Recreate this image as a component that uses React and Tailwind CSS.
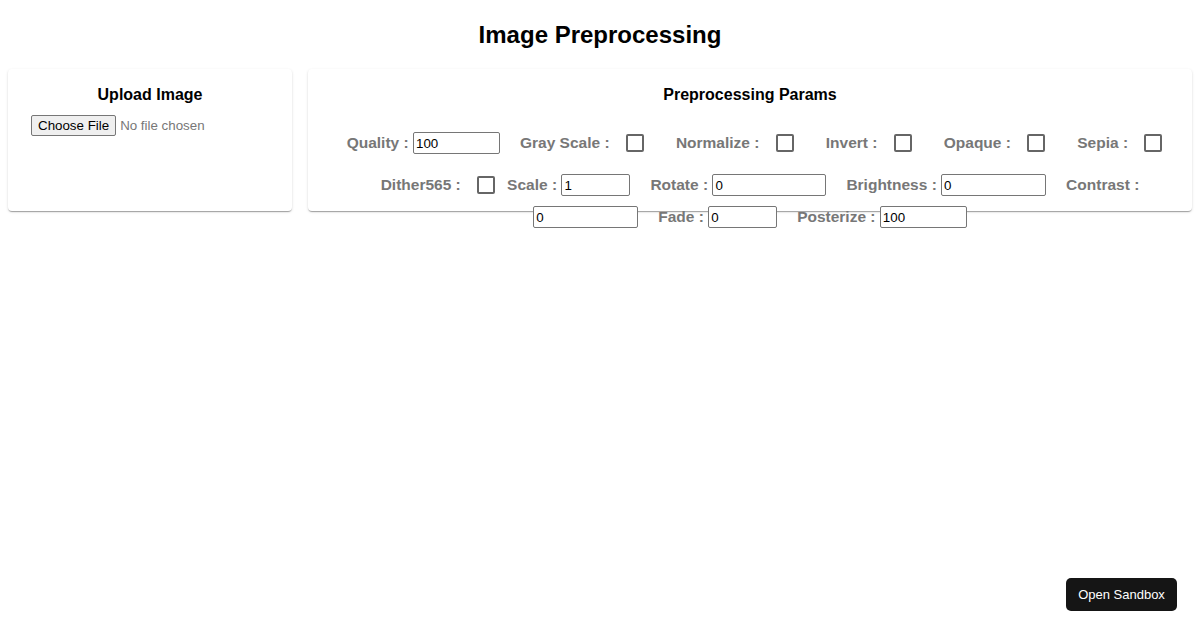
const font = { fontFamily: '"Liberation Sans", Arial, sans-serif' };

const Label = ({ text }) => (
  <span className="text-[15.5px] font-bold text-[#777] leading-[18px] whitespace-pre">{text}</span>
);

const NumField = ({ value, width }) => (
  <input
    type="text"
    defaultValue={value}
    className={`h-[22px] border border-[#767676] rounded-[2px] px-[2px] text-[13.33px] text-black bg-white outline-none ${width}`}
  />
);

const Check = ({ className = "" }) => (
  <input
    type="checkbox"
    className={`appearance-none w-[18px] h-[18px] border-2 border-[#666] rounded-[2px] bg-white ${className}`}
  />
);

const cardShadow =
  "shadow-[0_2px_1px_-1px_rgba(0,0,0,0.2),0_1px_1px_0_rgba(0,0,0,0.14),0_1px_3px_0_rgba(0,0,0,0.12)]";

const App = () => {
  return (
    <div className="min-h-screen bg-white text-black" style={font}>
      <div className="pt-[21px]">
        <h1 className="text-2xl leading-7 font-bold text-center">Image Preprocessing</h1>
      </div>

      <div className="flex gap-4 px-2 mt-5">
        <div className={`w-[284px] h-[142px] bg-white rounded pt-[17px] ${cardShadow}`}>
          <h3 className="text-base leading-[18px] font-bold text-center">Upload Image</h3>
          <div className="mt-[9px] pl-[23px]">
            <input
              type="file"
              className="text-[13.33px] text-[#777] leading-[17px] file:h-[21px] file:px-[6px] file:mr-[4px] file:border file:border-[#767676] file:rounded-[2px] file:bg-[#efefef] file:text-black file:text-[13.33px]"
              style={font}
            />
          </div>
        </div>

        <div className={`flex-1 h-[142px] bg-white rounded pt-[17px] ${cardShadow}`}>
          <h3 className="text-base leading-[18px] font-bold text-center">Preprocessing Params</h3>

          <div className="mt-[18px] h-[42px] flex items-center justify-center pl-[9px]">
            <div className="flex items-center">
              <Label text="Quality : " />
              <NumField value="100" width="w-[87px]" />
            </div>
            <div className="flex items-center ml-5">
              <Label text="Gray Scale : " />
              <Check className="ml-3" />
            </div>
            <div className="flex items-center ml-8">
              <Label text="Normalize : " />
              <Check className="ml-3" />
            </div>
            <div className="flex items-center ml-8">
              <Label text="Invert : " />
              <Check className="ml-3" />
            </div>
            <div className="flex items-center ml-8">
              <Label text="Opaque : " />
              <Check className="ml-3" />
            </div>
            <div className="flex items-center ml-8">
              <Label text="Sepia : " />
              <Check className="ml-3" />
            </div>
          </div>

          <div className="h-[42px] flex items-center justify-center pl-[20px]">
            <div className="flex items-center">
              <Label text="Dither565 : " />
              <Check className="ml-3" />
            </div>
            <div className="flex items-center ml-3">
              <Label text="Scale : " />
              <NumField value="1" width="w-[69px]" />
            </div>
            <div className="flex items-center ml-5">
              <Label text="Rotate : " />
              <NumField value="0" width="w-[114px]" />
            </div>
            <div className="flex items-center ml-5">
              <Label text="Brightness : " />
              <NumField value="0" width="w-[105px]" />
            </div>
            <div className="flex items-center ml-5">
              <Label text="Contrast :" />
            </div>
          </div>

          <div className="h-[22px] flex items-center justify-center">
            <NumField value="0" width="w-[105px]" />
            <div className="flex items-center ml-5">
              <Label text="Fade : " />
              <NumField value="0" width="w-[69px]" />
            </div>
            <div className="flex items-center ml-5">
              <Label text="Posterize : " />
              <NumField value="100" width="w-[87px]" />
            </div>
          </div>
        </div>
      </div>

      <button className="fixed right-[23px] bottom-[19px] w-[111px] h-[33px] bg-[#151515] text-white text-[13px] rounded-[5px]">
        Open Sandbox
      </button>
    </div>
  );
};

export default App;
